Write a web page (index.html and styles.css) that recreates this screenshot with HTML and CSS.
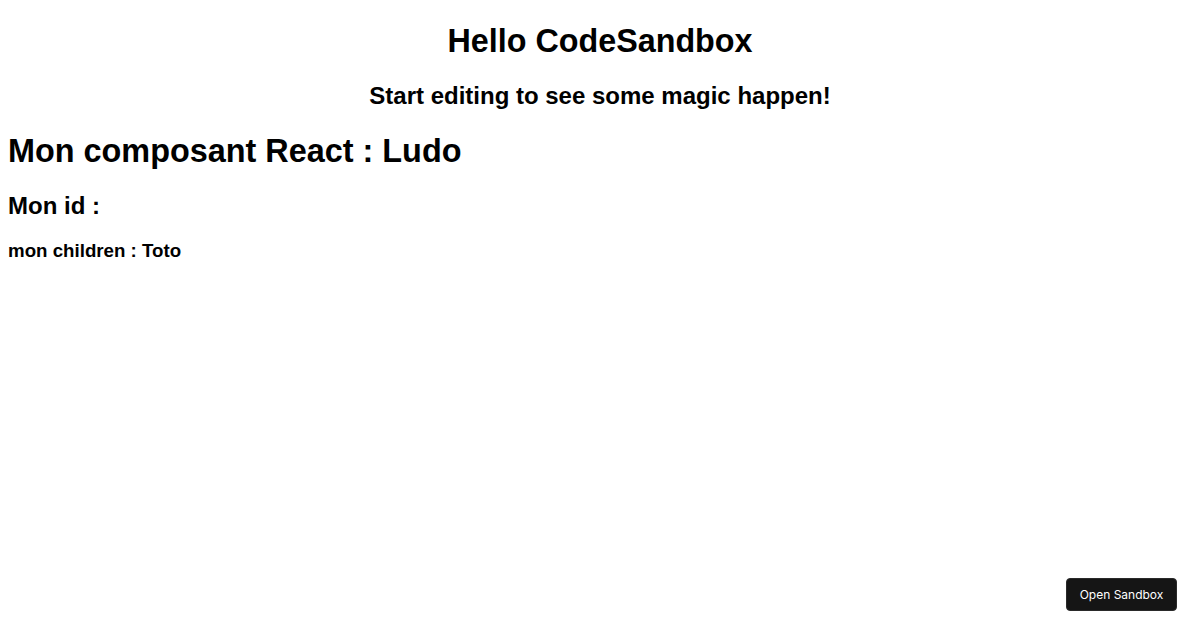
FILE: index.html
```html
<!DOCTYPE html>
<html lang="en">
<head>
    <meta charset="UTF-8">
    <title>React App</title>
    <link rel="stylesheet" href="styles.css">
</head>
<body>
    <div id="root">
        <div class="App">
            <h1>Hello CodeSandbox</h1>
            <h2>Start editing to see some magic happen!</h2>
        </div>
        <div class="composant">
            <h1>Mon composant React : Ludo</h1>
            <h2>Mon id : </h2>
            <h3>mon children : Toto</h3>
        </div>
    </div>
    <a class="open-sandbox" href="#">Open Sandbox</a>
</body>
</html>
```

FILE: styles.css
```css
body {
    font-family: "Liberation Sans", Arial, sans-serif;
    color: #000;
    background: #fff;
}
.App {
    text-align: center;
}
.App h1 {
    margin-top: 15px;
    font-size: 32.3px;
}
.App h2 {
    margin-top: 20px;
}
.composant h1 {
    margin-top: 23.5px;
    font-size: 32.4px;
}
.composant h2 {
    margin-top: 22px;
}
.composant h3 {
    margin-top: 20px;
}
.open-sandbox {
    position: fixed;
    right: 23px;
    bottom: 19px;
    width: 111px;
    height: 33px;
    display: flex;
    align-items: center;
    justify-content: center;
    box-sizing: border-box;
    background: #151515;
    color: #fff;
    border: 1px solid #2a2a2a;
    border-radius: 4px;
    font-family: Inter, "Noto Sans", sans-serif;
    font-size: 12px;
    text-decoration: none;
}
```
